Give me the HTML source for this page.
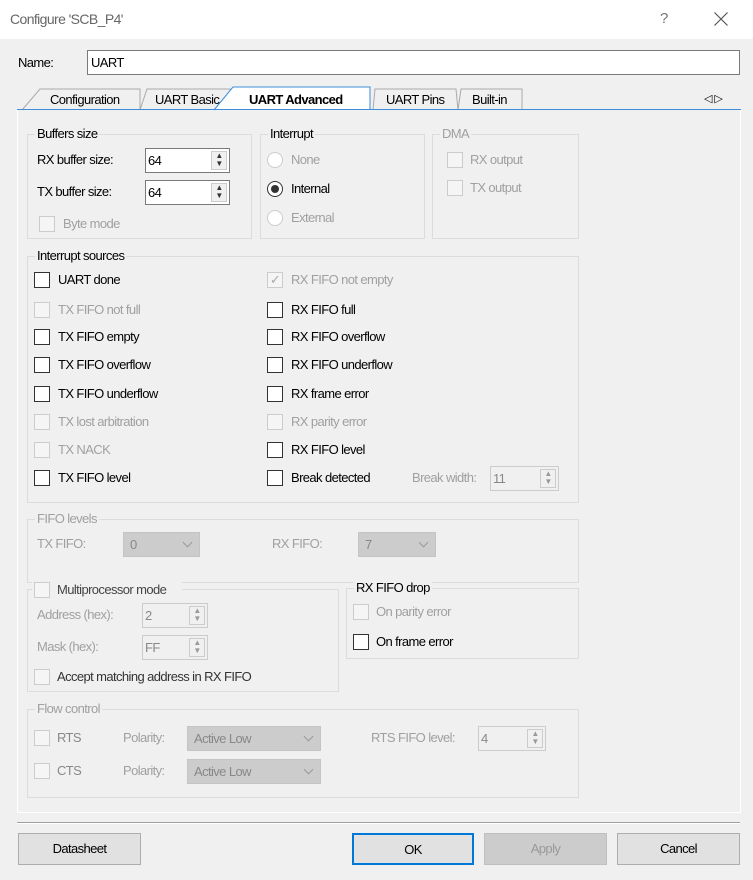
<!DOCTYPE html>
<html><head><meta charset="utf-8"><style>
*{box-sizing:border-box;margin:0;padding:0}
body{width:753px;height:880px;background:#f0f0f0;position:relative;overflow:hidden;font-family:"Liberation Sans",sans-serif;font-size:13px;letter-spacing:-0.6px;color:#000}
.a{position:absolute;white-space:nowrap}
.t{position:absolute;white-space:nowrap;line-height:16px}
.d{color:#a0a0a0}
.g{position:absolute;border:1px solid #dcdcdc}
.lg{position:absolute;background:#f0f0f0;padding:0 2px;line-height:14px;white-space:nowrap}
.cb{position:absolute;width:16px;height:16px;border:1px solid #333;background:#fff}
.cb.x{border-color:#ccc;background:#f5f5f5}
.sp{position:absolute;border:1px solid #7a7a7a;background:#fff;height:25px}
.sp.x{border-color:#ccc;background:#f0f0f0;color:#888}
.sp span{position:absolute;left:2px;top:4px}
.sp i{position:absolute;right:2px;top:2px;width:16px;height:19px;border:1px solid #ccc;background:#f0f0f0;font-style:normal;font-size:8px;line-height:8px;text-align:center;color:#333}
.sp.x i{color:#999}
.co{position:absolute;background:#ccc;border:1px solid #c4c4c4;height:25px;color:#888}
.co span{position:absolute;left:6px;top:4px}
.co b{position:absolute;right:8px;top:6px;width:7px;height:7px;border-right:1px solid #999;border-bottom:1px solid #999;transform:rotate(45deg)}
.rd{position:absolute;width:16px;height:16px;border-radius:50%;border:1px solid #ccc;background:#fff}
.btn{position:absolute;height:32px;border:1px solid #adadad;background:#e1e1e1;text-align:center;line-height:30px}
</style></head><body>
<div class="a" style="left:0;top:0;width:753px;height:39px;background:#fff"></div>
<div class="a" style="left:10px;top:11px;font-size:14px;color:#666">Configure 'SCB_P4'</div>
<div class="a" style="left:660px;top:10px;font-size:15px;color:#777">?</div>
<svg class="a" style="left:714px;top:12px" width="14" height="14"><path d="M0.5 0.5L13.5 13.5M13.5 0.5L0.5 13.5" stroke="#555" stroke-width="1.2"/></svg>
<div class="t" style="left:18px;top:55px">Name:</div>
<div class="a" style="left:87px;top:50px;width:653px;height:25px;border:1px solid #7a7a7a;background:#fff"><span class="a" style="left:3px;top:4px">UART</span></div>

<svg class="a" style="left:17px;top:86px" width="510" height="25">
<path d="M5 24 L23 3 L123 3 L123 24" fill="#f0f0f0" stroke="#aaa"/>
<path d="M123 24 L130 3 L213 3 L216 24" fill="#f0f0f0" stroke="#aaa"/>
<path d="M356 24 L358 3 L439 3 L441 24" fill="#f0f0f0" stroke="#aaa"/>
<path d="M441 24 L444 3 L505 3 L505 24" fill="#f0f0f0" stroke="#aaa"/>
<path d="M197 24 L216 1 L353 1 L353 24" fill="#fff" stroke="#3c8ed8"/>
</svg>
<div class="t" style="left:50px;top:92px">Configuration</div>
<div class="t" style="left:155px;top:92px">UART Basic</div>
<div class="t" style="left:249px;top:92px;font-weight:bold">UART Advanced</div>
<div class="t" style="left:386px;top:92px">UART Pins</div>
<div class="t" style="left:472px;top:92px">Built-in</div>
<div class="t" style="left:704px;top:91px;font-size:11px">◁ ▷</div>
<div class="a" style="left:17px;top:109px;width:724px;height:1px;background:#3c8ed8"></div>
<div class="a" style="left:17px;top:110px;width:724px;height:703px;border:1px solid #fff;border-top:none"></div>

<!-- Buffers -->
<div class="g" style="left:27px;top:134px;width:225px;height:105px"></div>
<div class="lg" style="left:35px;top:127px">Buffers size</div>
<div class="t" style="left:37px;top:152px">RX buffer size:</div>
<div class="sp" style="left:145px;top:148px;width:85px"><span>64</span><i>▲<br>▼</i></div>
<div class="t" style="left:37px;top:184px">TX buffer size:</div>
<div class="sp" style="left:145px;top:180px;width:85px"><span>64</span><i>▲<br>▼</i></div>
<div class="cb x" style="left:39px;top:216px"></div><div class="t d" style="left:63px;top:216px">Byte mode</div>

<div class="g" style="left:260px;top:134px;width:165px;height:105px"></div>
<div class="lg" style="left:268px;top:127px">Interrupt</div>
<div class="rd" style="left:267px;top:152px"></div><div class="t d" style="left:291px;top:152px">None</div>
<div class="rd" style="left:267px;top:181px;border-color:#333"><div class="a" style="left:3px;top:3px;width:8px;height:8px;border-radius:50%;background:#333"></div></div><div class="t" style="left:291px;top:181px">Internal</div>
<div class="rd" style="left:267px;top:210px"></div><div class="t d" style="left:291px;top:210px">External</div>

<div class="g" style="left:432px;top:134px;width:147px;height:105px"></div>
<div class="lg d" style="left:440px;top:127px">DMA</div>
<div class="cb x" style="left:447px;top:152px"></div><div class="t d" style="left:470px;top:152px">RX output</div>
<div class="cb x" style="left:447px;top:180px"></div><div class="t d" style="left:470px;top:180px">TX output</div>

<!-- Interrupt sources -->
<div class="g" style="left:27px;top:256px;width:552px;height:247px"></div>
<div class="lg" style="left:35px;top:249px">Interrupt sources</div>
<div class="cb" style="left:34px;top:272px"></div><div class="t" style="left:58px;top:272px">UART done</div>
<div class="cb x" style="left:34px;top:302px"></div><div class="t d" style="left:58px;top:302px">TX FIFO not full</div>
<div class="cb" style="left:34px;top:329px"></div><div class="t" style="left:58px;top:329px">TX FIFO empty</div>
<div class="cb" style="left:34px;top:357px"></div><div class="t" style="left:58px;top:357px">TX FIFO overflow</div>
<div class="cb" style="left:34px;top:386px"></div><div class="t" style="left:58px;top:386px">TX FIFO underflow</div>
<div class="cb x" style="left:34px;top:414px"></div><div class="t d" style="left:58px;top:414px">TX lost arbitration</div>
<div class="cb x" style="left:34px;top:442px"></div><div class="t d" style="left:58px;top:442px">TX NACK</div>
<div class="cb" style="left:34px;top:470px"></div><div class="t" style="left:58px;top:470px">TX FIFO level</div>

<div class="cb x" style="left:267px;top:272px;color:#aaa;font-size:13px;line-height:14px;text-align:center">✓</div><div class="t d" style="left:291px;top:272px">RX FIFO not empty</div>
<div class="cb" style="left:267px;top:302px"></div><div class="t" style="left:291px;top:302px">RX FIFO full</div>
<div class="cb" style="left:267px;top:329px"></div><div class="t" style="left:291px;top:329px">RX FIFO overflow</div>
<div class="cb" style="left:267px;top:357px"></div><div class="t" style="left:291px;top:357px">RX FIFO underflow</div>
<div class="cb" style="left:267px;top:386px"></div><div class="t" style="left:291px;top:386px">RX frame error</div>
<div class="cb x" style="left:267px;top:414px"></div><div class="t d" style="left:291px;top:414px">RX parity error</div>
<div class="cb" style="left:267px;top:442px"></div><div class="t" style="left:291px;top:442px">RX FIFO level</div>
<div class="cb" style="left:267px;top:470px"></div><div class="t" style="left:291px;top:470px">Break detected</div>
<div class="t d" style="left:412px;top:470px">Break width:</div>
<div class="sp x" style="left:490px;top:466px;width:69px"><span>11</span><i>▲<br>▼</i></div>

<!-- FIFO levels -->
<div class="g" style="left:27px;top:519px;width:552px;height:64px"></div>
<div class="lg d" style="left:35px;top:512px">FIFO levels</div>
<div class="t d" style="left:37px;top:536px">TX FIFO:</div>
<div class="co" style="left:123px;top:532px;width:77px"><span>0</span><b></b></div>
<div class="t d" style="left:272px;top:536px">RX FIFO:</div>
<div class="co" style="left:358px;top:532px;width:78px"><span>7</span><b></b></div>

<!-- Multiprocessor -->
<div class="g" style="left:27px;top:589px;width:312px;height:103px"></div>
<div class="lg" style="left:32px;top:582px;width:150px;height:16px"></div>
<div class="cb x" style="left:34px;top:582px"></div><div class="t" style="left:57px;top:582px;color:#444">Multiprocessor mode</div>
<div class="t d" style="left:37px;top:607px">Address (hex):</div>
<div class="sp x" style="left:142px;top:603px;width:66px"><span>2</span><i>▲<br>▼</i></div>
<div class="t d" style="left:37px;top:639px">Mask (hex):</div>
<div class="sp x" style="left:142px;top:635px;width:66px"><span>FF</span><i>▲<br>▼</i></div>
<div class="cb x" style="left:34px;top:669px"></div><div class="t" style="left:57px;top:669px;color:#333">Accept matching address in RX FIFO</div>

<div class="g" style="left:346px;top:588px;width:233px;height:71px"></div>
<div class="lg" style="left:354px;top:581px">RX FIFO drop</div>
<div class="cb x" style="left:353px;top:604px"></div><div class="t d" style="left:376px;top:604px">On parity error</div>
<div class="cb" style="left:353px;top:634px"></div><div class="t" style="left:376px;top:634px">On frame error</div>

<!-- Flow -->
<div class="g" style="left:27px;top:709px;width:552px;height:89px"></div>
<div class="lg d" style="left:35px;top:702px">Flow control</div>
<div class="cb x" style="left:34px;top:730px"></div><div class="t d" style="left:57px;top:730px;color:#888">RTS</div>
<div class="t d" style="left:123px;top:730px">Polarity:</div>
<div class="co" style="left:187px;top:726px;width:134px"><span>Active Low</span><b></b></div>
<div class="t d" style="left:371px;top:730px">RTS FIFO level:</div>
<div class="sp x" style="left:478px;top:726px;width:68px"><span>4</span><i>▲<br>▼</i></div>
<div class="cb x" style="left:34px;top:763px"></div><div class="t d" style="left:57px;top:763px;color:#888">CTS</div>
<div class="t d" style="left:123px;top:763px">Polarity:</div>
<div class="co" style="left:187px;top:759px;width:134px"><span>Active Low</span><b></b></div>

<div class="a" style="left:17px;top:822px;width:723px;height:2px;border-top:1px solid #a0a0a0;border-bottom:1px solid #fff"></div>
<div class="btn" style="left:18px;top:833px;width:123px">Datasheet</div>
<div class="btn" style="left:352px;top:833px;width:122px;border:2px solid #0078d7">OK</div>
<div class="btn" style="left:484px;top:833px;width:123px;background:#ccc;border-color:#bfbfbf;color:#999">Apply</div>
<div class="btn" style="left:617px;top:833px;width:123px">Cancel</div>
</body></html>
